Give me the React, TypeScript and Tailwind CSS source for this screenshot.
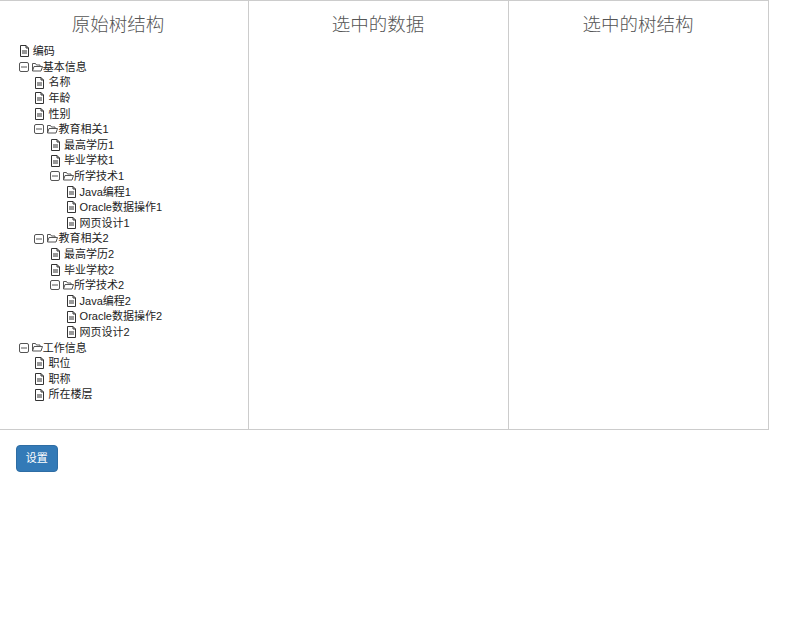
type TreeNode = {
    label: string;
    children?: TreeNode[];
};

const tree = (n: number): TreeNode => ({
    label: `教育相关${n}`,
    children: [
        { label: `最高学历${n}` },
        { label: `毕业学校${n}` },
        {
            label: `所学技术${n}`,
            children: [
                { label: `Java编程${n}` },
                { label: `Oracle数据操作${n}` },
                { label: `网页设计${n}` }
            ]
        }
    ]
});

const data: TreeNode[] = [
    { label: '编码' },
    {
        label: '基本信息',
        children: [{ label: '名称' }, { label: '年龄' }, { label: '性别' }, tree(1), tree(2)]
    },
    {
        label: '工作信息',
        children: [{ label: '职位' }, { label: '职称' }, { label: '所在楼层' }]
    }
];

const FileIcon = () => (
    <svg width="11" height="12" viewBox="0 0 11 12" fill="none" stroke="#333" strokeWidth="1" className="shrink-0">
        <path d="M1.5 .5h5.500l2.500 2.500v8.500h-8z" />
        <path d="M7 .5v2.500h2.500M3 6h5M3 8h5" />
    </svg>
);

const MinusIcon = () => (
    <svg width="10" height="10" viewBox="0 0 10 10" fill="none" stroke="#555" strokeWidth="1" className="shrink-0">
        <rect x=".5" y=".5" width="9" height="9" rx="1.500" />
        <path d="M2 5h6" />
    </svg>
);

const FolderIcon = () => (
    <svg width="11" height="9" viewBox="0 0 11 9" fill="none" stroke="#555" strokeWidth="1" className="shrink-0">
        <path d="M.5 8V.5h3l1 1.500h3.500v1.500M.5 8l1.500-4.500h8.500L9 8z" />
    </svg>
);

const Node = ({ node }: { node: TreeNode }) => (
    <li>
        {node.children ? (
            <div className="flex h-[15.6px] items-center">
                <MinusIcon />
                <span className="ml-[3px]"><FolderIcon /></span>
                <span>{node.label}</span>
            </div>
        ) : (
            <div className="flex h-[15.6px] items-center gap-[3px]">
                <FileIcon />
                <span>{node.label}</span>
            </div>
        )}
        {node.children && (
            <ul className="pl-[15.6px]">
                {node.children.map(c => <Node key={c.label} node={c} />)}
            </ul>
        )}
    </li>
);

const Title = ({ text }: { text: string }) => (
    <h4 className="mt-[10px] text-center text-[18.500px] leading-[24px] font-light text-[#555] font-['Noto_Sans_CJK_SC',serif]">
        {text}
    </h4>
);

export default function App() {
    return (
        <div className="min-h-[625px] bg-white text-[11px] text-[#222] font-['Liberation_Sans','Noto_Sans_CJK_SC',sans-serif]">
            <div className="flex h-[430px] w-[769px] border-y border-r border-[#ccc]">
                <div className="w-[249px] border-r border-[#ccc] pr-[12px]">
                    <Title text="原始树结构" />
                    <ul className="pl-[18.800px] pt-[8.700px]">
                        {data.map(n => <Node key={n.label} node={n} />)}
                    </ul>
                </div>
                <div className="w-[260px] border-r border-[#ccc] pr-[1px]">
                    <Title text="选中的数据" />
                </div>
                <div className="flex-1 pr-[1px]">
                    <Title text="选中的树结构" />
                </div>
            </div>
            <div className="pl-[15.5px] pt-[15px]">
                <button className="h-[27px] w-[42.5px] rounded-[4px] border border-[#2e6da4] bg-[#337ab7] text-[11px] text-white">
                    设置
                </button>
            </div>
        </div>
    );
}
